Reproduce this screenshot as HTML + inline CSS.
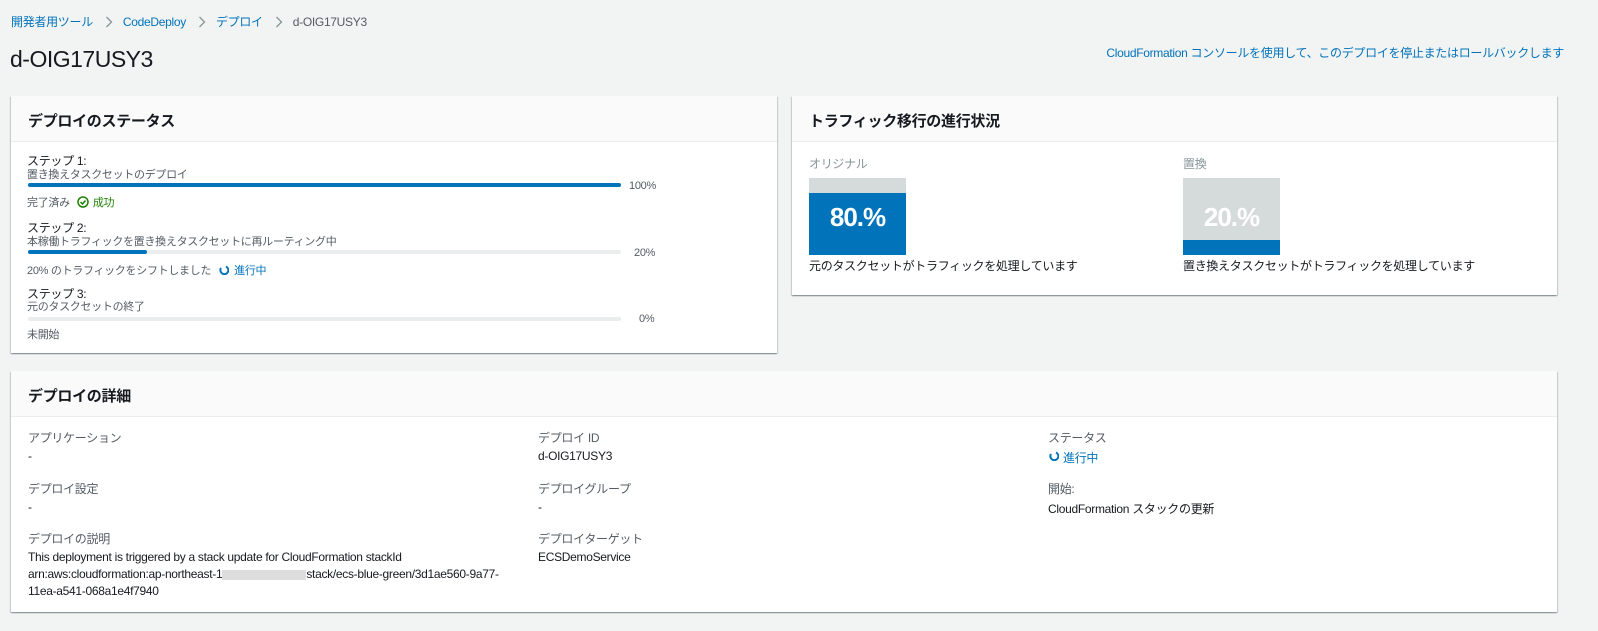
<!DOCTYPE html>
<html><head><meta charset="utf-8"><style>
*{margin:0;padding:0;box-sizing:border-box}
body{width:1598px;height:631px;background:#f2f3f3;font-family:"Liberation Sans","Noto Sans CJK JP",sans-serif;color:#16191f;position:relative;overflow:hidden}
.a{position:absolute;white-space:nowrap}
.s{font-size:11px;letter-spacing:-0.3px}
.m{font-size:12px;letter-spacing:-0.3px}
.g{color:#545b64}
.b{color:#0073bb}
.panel{position:absolute;background:#fff;box-shadow:0 1px 1px rgba(0,28,36,.3),1px 1px 1px rgba(0,28,36,.15),-1px 1px 1px rgba(0,28,36,.15)}
.hd{position:absolute;left:0;right:0;top:0;height:46px;background:#fafafa;border-bottom:1px solid #eaeded}
.hd span{position:absolute;left:17px;top:14px;font-size:15px;font-weight:bold;letter-spacing:-0.3px}
.bar{position:absolute;height:4px;background:#eaeded;border-radius:2px;left:17px;width:593px}
.bar i{display:block;height:4px;background:#0073bb;border-radius:2px}
.fl{display:flex;align-items:center}
.chev{margin:0 10px 0 12px}
</style></head><body>
<div class="a m fl" style="left:11px;top:13px">
<span class="b">開発者用ツール</span>
<svg class="chev" width="8" height="12" viewBox="0 0 8 12"><path d="M1.5 1l5 5-5 5" fill="none" stroke="#879596" stroke-width="1.3"/></svg>
<span class="b">CodeDeploy</span>
<svg class="chev" width="8" height="12" viewBox="0 0 8 12"><path d="M1.5 1l5 5-5 5" fill="none" stroke="#879596" stroke-width="1.3"/></svg>
<span class="b">デプロイ</span>
<svg class="chev" width="8" height="12" viewBox="0 0 8 12"><path d="M1.5 1l5 5-5 5" fill="none" stroke="#879596" stroke-width="1.3"/></svg>
<span class="g">d-OIG17USY3</span>
</div>
<div class="a" style="left:10px;top:46px;font-size:23px;letter-spacing:-0.5px">d-OIG17USY3</div>
<div class="a m b" style="right:34px;top:44px">CloudFormation コンソールを使用して、このデプロイを停止またはロールバックします</div>

<div class="panel" style="left:11px;top:96px;width:766px;height:257px">
<div class="hd"><span>デプロイのステータス</span></div>
<div class="a m" style="left:16px;top:56px">ステップ 1:</div>
<div class="a s g" style="left:16px;top:70px">置き換えタスクセットのデプロイ</div>
<div class="bar" style="top:87px"><i style="width:100%"></i></div>
<div class="a s g" style="left:618px;top:84px">100%</div>
<div class="a s fl" style="left:16px;top:98px"><span class="g">完了済み</span>
<svg style="margin:0 4px 0 7px" width="12" height="12" viewBox="0 0 12 12"><circle cx="6" cy="6" r="5" fill="none" stroke="#1d8102" stroke-width="1.5"/><path d="M3.5 6l2 2 3-3.5" fill="none" stroke="#1d8102" stroke-width="1.5"/></svg>
<span style="color:#1d8102">成功</span></div>
<div class="a m" style="left:16px;top:123px">ステップ 2:</div>
<div class="a s g" style="left:16px;top:137px">本稼働トラフィックを置き換えタスクセットに再ルーティング中</div>
<div class="bar" style="top:154px"><i style="width:20%"></i></div>
<div class="a s g" style="left:623px;top:151px">20%</div>
<div class="a s fl" style="left:16px;top:166px"><span class="g">20% のトラフィックをシフトしました</span>
<svg style="margin:0 5px 0 8px" width="10" height="10" viewBox="0 0 10 10"><path d="M2 3A4 4 0 1 0 7 1.5" fill="none" stroke="#0073bb" stroke-width="2"/></svg>
<span class="b">進行中</span></div>
<div class="a m" style="left:16px;top:189px">ステップ 3:</div>
<div class="a s g" style="left:16px;top:202px">元のタスクセットの終了</div>
<div class="bar" style="top:221px"></div>
<div class="a s g" style="left:628px;top:217px">0%</div>
<div class="a s g" style="left:16px;top:230px">未開始</div>
</div>

<div class="panel" style="left:792px;top:96px;width:765px;height:199px">
<div class="hd"><span>トラフィック移行の進行状況</span></div>
<div class="a m" style="left:17px;top:59px;color:#879596">オリジナル</div>
<div class="a" style="left:17px;top:82px;width:97px;height:77px;background:#d5dbdb"><div style="position:absolute;left:0;right:0;bottom:0;height:62px;background:#0073bb"></div><div style="position:absolute;left:0;right:0;top:24px;text-align:center;color:#fff;font-size:26px;font-weight:bold;letter-spacing:-1px">80.%</div></div>
<div class="a m" style="left:17px;top:161px">元のタスクセットがトラフィックを処理しています</div>
<div class="a m" style="left:391px;top:59px;color:#879596">置換</div>
<div class="a" style="left:391px;top:82px;width:97px;height:77px;background:#d5dbdb"><div style="position:absolute;left:0;right:0;bottom:0;height:15px;background:#0073bb"></div><div style="position:absolute;left:0;right:0;top:24px;text-align:center;color:#fff;font-size:26px;font-weight:bold;letter-spacing:-1px">20.%</div></div>
<div class="a m" style="left:391px;top:161px">置き換えタスクセットがトラフィックを処理しています</div>
</div>

<div class="panel" style="left:11px;top:371px;width:1546px;height:241px">
<div class="hd"><span>デプロイの詳細</span></div>
<div class="a m g" style="left:17px;top:58px">アプリケーション</div>
<div class="a m" style="left:17px;top:78px">-</div>
<div class="a m g" style="left:17px;top:109px">デプロイ設定</div>
<div class="a m" style="left:17px;top:129px">-</div>
<div class="a m g" style="left:17px;top:159px">デプロイの説明</div>
<div class="a m" style="left:17px;top:178px;line-height:17px">This deployment is triggered by a stack update for CloudFormation stackId<br>arn:aws:cloudformation:ap-northeast-1<span style="display:inline-block;width:84px;height:10px;background:#ddd;vertical-align:middle"></span>stack/ecs-blue-green/3d1ae560-9a77-<br>11ea-a541-068a1e4f7940</div>
<div class="a m g" style="left:527px;top:58px">デプロイ ID</div>
<div class="a m" style="left:527px;top:78px">d-OIG17USY3</div>
<div class="a m g" style="left:527px;top:109px">デプロイグループ</div>
<div class="a m" style="left:527px;top:129px">-</div>
<div class="a m g" style="left:527px;top:159px">デプロイターゲット</div>
<div class="a m" style="left:527px;top:179px">ECSDemoService</div>
<div class="a m g" style="left:1037px;top:58px">ステータス</div>
<svg class="a" style="left:1038px;top:80px" width="10" height="10" viewBox="0 0 10 10"><path d="M2 3A4 4 0 1 0 7 1.5" fill="none" stroke="#0073bb" stroke-width="2"/></svg>
<div class="a m b" style="left:1052px;top:78px">進行中</div>
<div class="a m g" style="left:1037px;top:109px">開始:</div>
<div class="a m" style="left:1037px;top:129px">CloudFormation スタックの更新</div>
</div>
</body></html>
